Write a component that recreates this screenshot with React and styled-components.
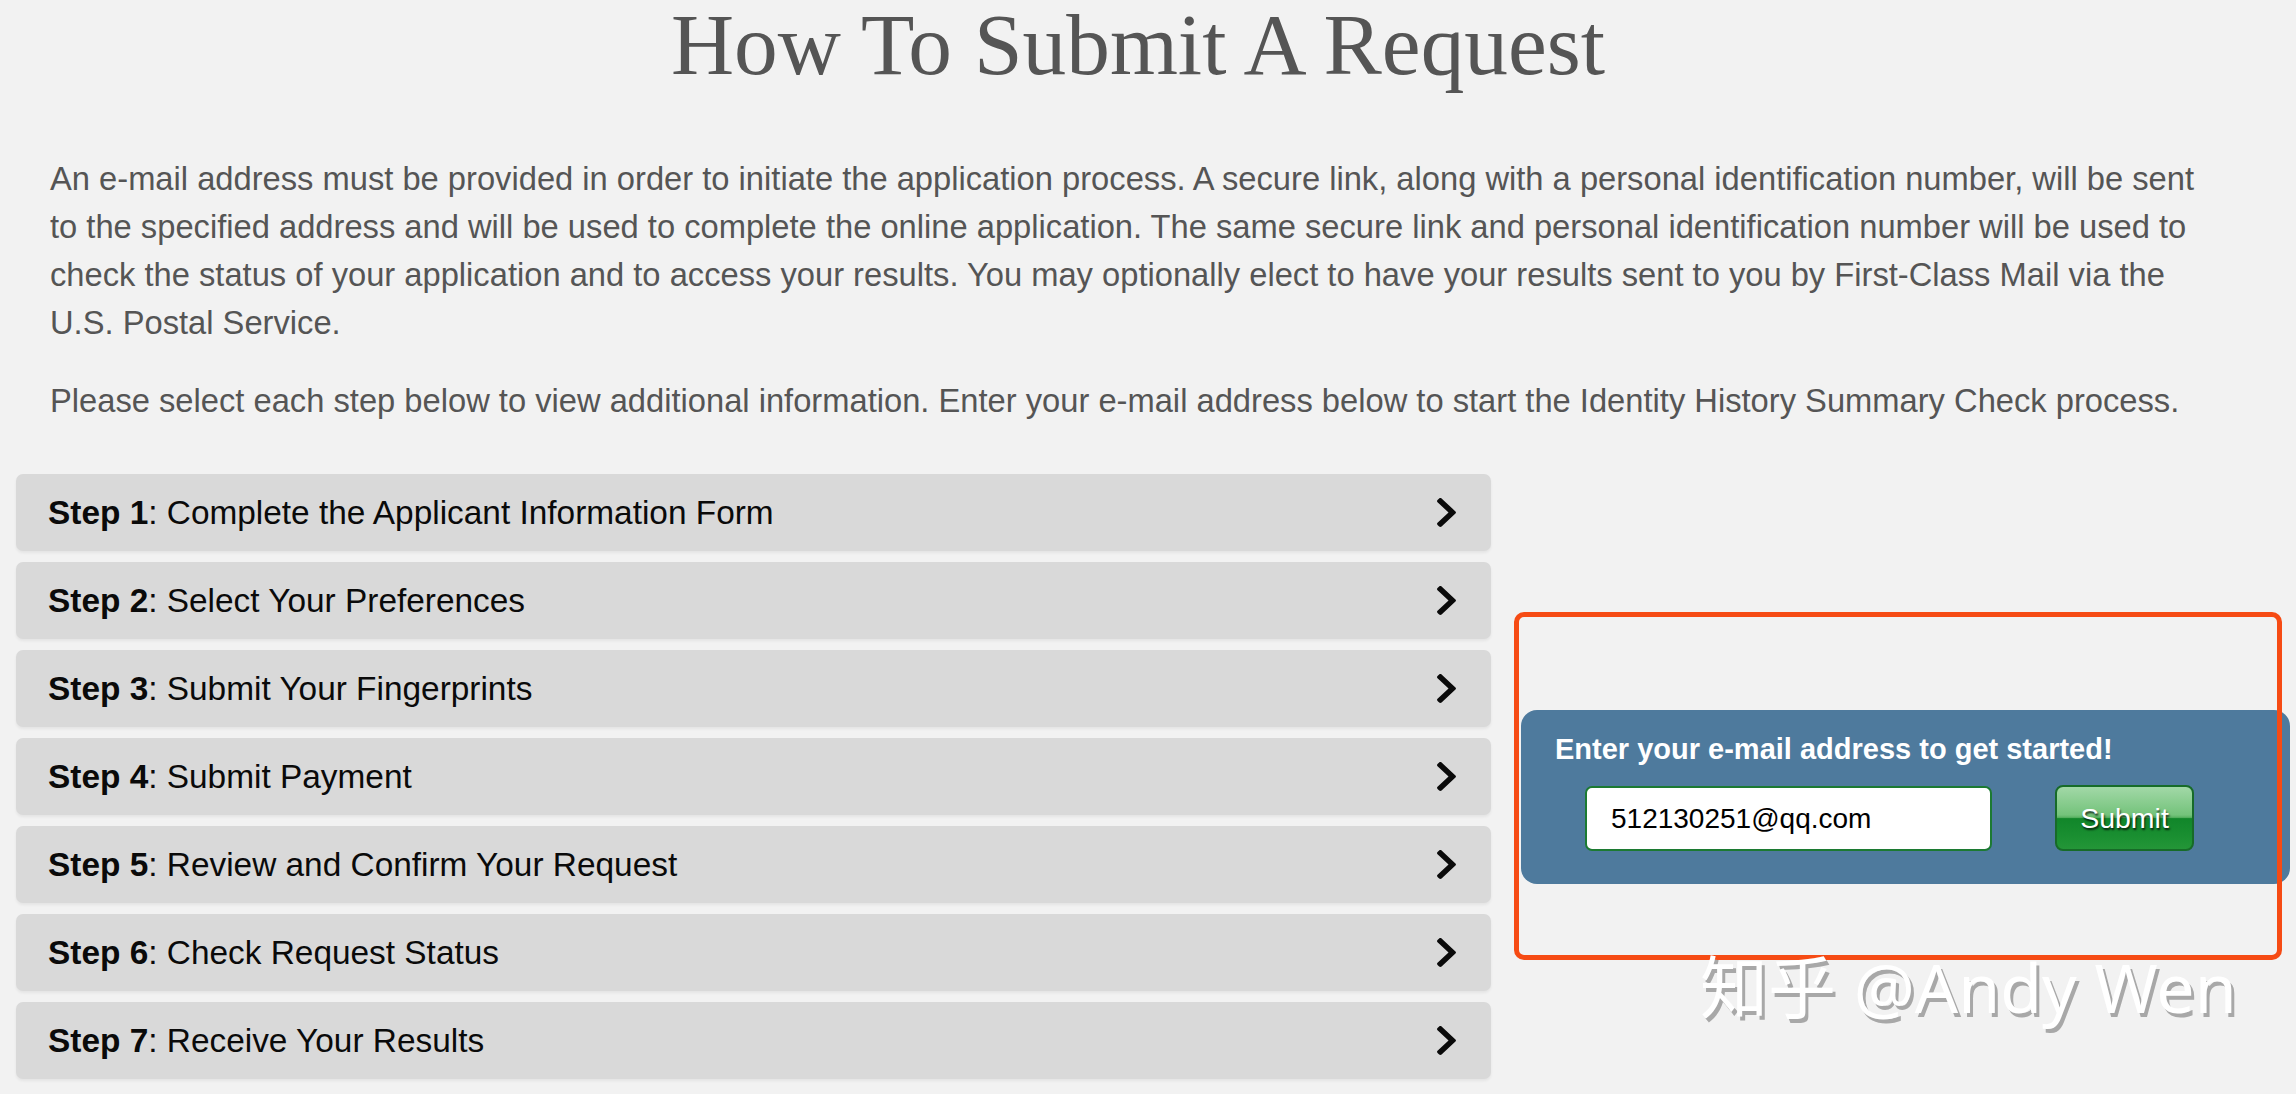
import React from "react";
import styled, { createGlobalStyle } from "styled-components";

const GlobalStyle = createGlobalStyle`
  html, body { margin: 0; padding: 0; }
  body {
    background: #f2f2f2;
    font-family: "Liberation Sans", Arial, sans-serif;
    width: 2296px;
    height: 1094px;
    overflow: hidden;
  }
`;

const Page = styled.div`
  position: relative;
  width: 2296px;
  height: 1094px;
  overflow: hidden;
`;

const Title = styled.h1`
  margin: 0;
  padding: 0 20px 0 0;
  text-align: center;
  font-family: "Liberation Serif", "Times New Roman", serif;
  font-weight: 400;
  font-size: 87.4px;
  line-height: 90px;
  color: #555555;
`;

const Intro = styled.section`
  padding: 65px 84px 0 50px;
`;

const Para = styled.p`
  margin: 0 0 ${(p) => p.$gap || 0}px 0;
  font-size: 32.7px;
  line-height: 48px;
  color: #555555;
`;

const Main = styled.div`
  display: flex;
  align-items: flex-start;
  gap: 30px;
  padding: 49px 0 0 16px;
`;

const StepList = styled.div`
  width: 1475px;
  display: flex;
  flex-direction: column;
  gap: 11px;
`;

const StepRow = styled.div`
  height: 77px;
  display: flex;
  align-items: center;
  justify-content: space-between;
  padding: 0 35px 0 32px;
  box-sizing: border-box;
  background: #d9d9d9;
  border-radius: 7px;
  box-shadow: 0 2px 3px rgba(0, 0, 0, 0.06);
  color: #0a0a0a;
  font-size: 33.4px;
`;

const StepLabel = styled.span`
  white-space: nowrap;
`;

const StepNum = styled.b`
  font-weight: 700;
`;

const Chevron = styled.svg`
  width: 19px;
  height: 29px;
  flex: none;
`;

const EmailBox = styled.div`
  margin-top: 236px;
  width: 769px;
  height: 174px;
  box-sizing: border-box;
  background: #4e7a9d;
  border-radius: 16px;
  padding: 21px 0 0 34px;
`;

const EmailHeading = styled.div`
  font-weight: 700;
  font-size: 29px;
  line-height: 36px;
  color: #ffffff;
`;

const FormRow = styled.div`
  display: flex;
  align-items: center;
  gap: 63px;
  margin: 18px 0 0 30px;
`;

const EmailInput = styled.input`
  width: 407px;
  height: 65px;
  box-sizing: border-box;
  border: 2.5px solid #1c7a32;
  border-radius: 7px;
  background: #ffffff;
  padding: 2px 0 0 24px;
  font-family: "Liberation Sans", Arial, sans-serif;
  font-size: 28px;
  color: #000;
  outline: none;
`;

const SubmitButton = styled.button`
  width: 139px;
  height: 66px;
  box-sizing: border-box;
  border: 2.5px solid #176b28;
  border-radius: 8px;
  background: linear-gradient(
    to bottom,
    #a2d8a7 0%,
    #74c37b 45%,
    #5bb364 49%,
    #11862a 51%,
    #1a8f31 80%,
    #249638 100%
  );
  color: #ffffff;
  font-family: "Liberation Sans", Arial, sans-serif;
  font-size: 28.5px;
  text-shadow: 1px 2px 2px rgba(0, 0, 0, 0.75);
  padding: 0;
  cursor: pointer;
`;

const Annotation = styled.div`
  position: absolute;
  left: 1514px;
  top: 612px;
  width: 768px;
  height: 348px;
  box-sizing: border-box;
  border: 5px solid #f64b14;
  border-radius: 10px;
  pointer-events: none;
`;

const Watermark = styled.div`
  position: absolute;
  left: 1700px;
  top: 942px;
  font-family: "Noto Sans", "Noto Sans CJK SC", sans-serif;
  font-size: 68px;
  line-height: 90px;
  color: #ffffff;
  text-shadow: 3px 4px 0 #a8a8a8;
  white-space: nowrap;
  pointer-events: none;
`;

const steps = [
  "Complete the Applicant Information Form",
  "Select Your Preferences",
  "Submit Your Fingerprints",
  "Submit Payment",
  "Review and Confirm Your Request",
  "Check Request Status",
  "Receive Your Results",
];

function ChevronRight() {
  return (
    <Chevron viewBox="27 37 266 438" preserveAspectRatio="none">
      <path
        fill="#0a0a0a"
        d="M285.476 272.971L91.132 467.314c-9.373 9.373-24.569 9.373-33.941 0l-22.667-22.667c-9.357-9.357-9.375-24.522-.04-33.901L188.505 256 34.484 101.255c-9.335-9.379-9.317-24.544.04-33.901l22.667-22.667c9.373-9.373 24.569-9.373 33.941 0L285.475 239.03c9.373 9.372 9.373 24.568.001 33.941z"
      />
    </Chevron>
  );
}

export default function App() {
  return (
    <Page>
      <GlobalStyle />
      <Title>How To Submit A Request</Title>
      <Intro>
        <Para $gap={30}>
          An e-mail address must be provided in order to initiate the
          application process. A secure link, along with a personal
          identification number, will be sent to the specified address and will
          be used to complete the online application. The same secure link and
          personal identification number will be used to check the status of
          your application and to access your results. You may optionally elect
          to have your results sent to you by First-Class Mail via the U.S.
          Postal Service.
        </Para>
        <Para>
          Please select each step below to view additional information. Enter
          your e-mail address below to start the Identity History Summary Check
          process.
        </Para>
      </Intro>
      <Main>
        <StepList>
          {steps.map((s, i) => (
            <StepRow key={i}>
              <StepLabel>
                <StepNum>Step {i + 1}</StepNum>: {s}
              </StepLabel>
              <ChevronRight />
            </StepRow>
          ))}
        </StepList>
        <EmailBox>
          <EmailHeading>Enter your e-mail address to get started!</EmailHeading>
          <FormRow>
            <EmailInput type="email" defaultValue="512130251@qq.com" />
            <SubmitButton type="button">Submit</SubmitButton>
          </FormRow>
        </EmailBox>
      </Main>
      <Annotation />
      <Watermark>知乎 @Andy Wen</Watermark>
    </Page>
  );
}
